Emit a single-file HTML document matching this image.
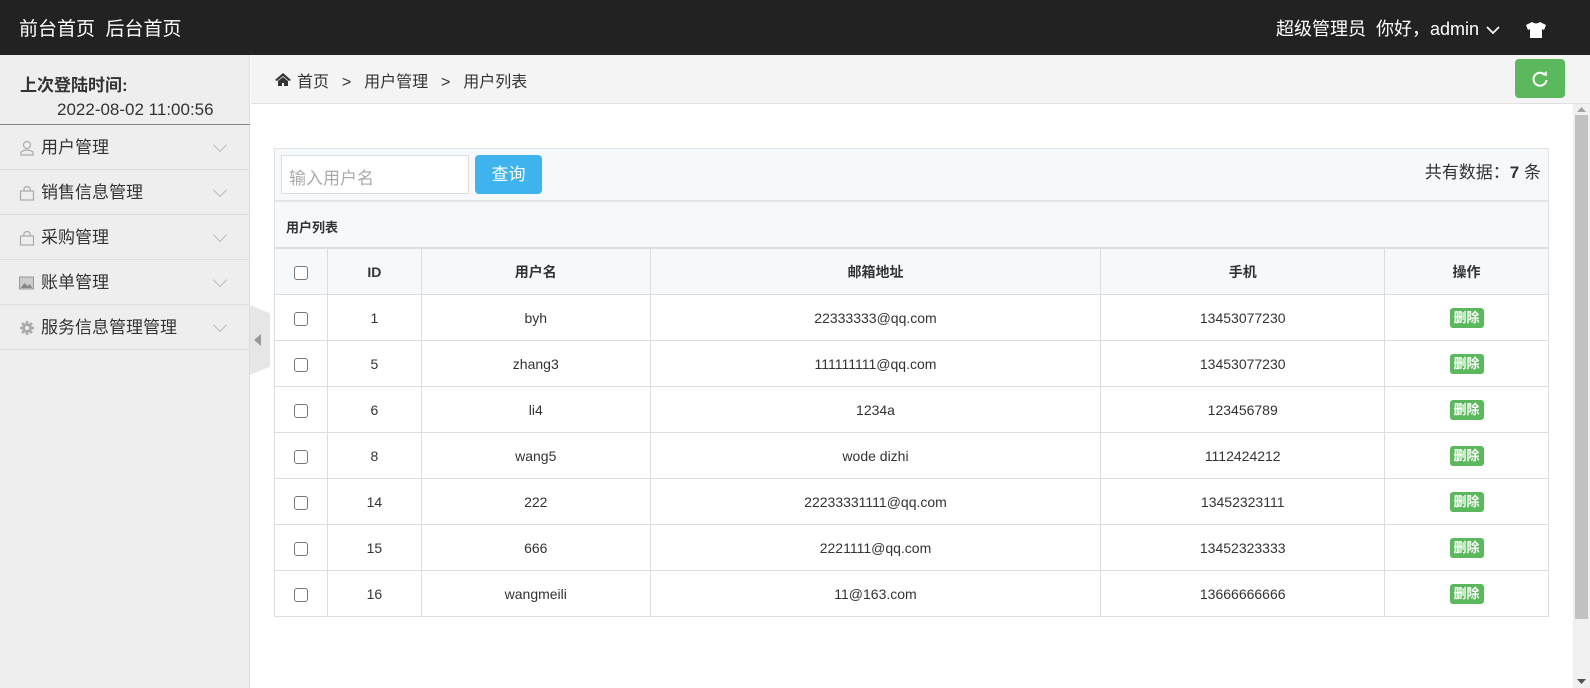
<!DOCTYPE html>
<html><head><meta charset="utf-8"><style>
*{margin:0;padding:0;box-sizing:border-box}
body{width:1590px;height:688px;overflow:hidden;background:#fff;font-family:"Liberation Sans","Noto Sans CJK SC",sans-serif;color:#333;position:relative}
.top{position:absolute;left:0;top:0;width:1590px;height:55px;background:#222;color:#fff;font-size:19px}
.top .l{position:absolute;left:19px;top:14px}
.top .r{position:absolute;left:1276px;top:15px;font-size:18px}
.side{position:absolute;left:0;top:55px;width:250px;height:633px;background:#eee;border-right:1px solid #ddd}
.side .h{position:absolute;left:20px;top:16px;font-size:17px;font-weight:bold}
.side .d{position:absolute;left:57px;top:45px;font-size:17px}
.side .line{position:absolute;left:0;top:69px;width:250px;height:1px;background:#888}
.menu{position:absolute;left:0;top:70px;width:250px}
.mi{height:45px;border-bottom:1px solid #ddd;font-size:17px;line-height:46px;padding-left:41px;position:relative}
.mi .ic{position:absolute;left:19px;top:15px;width:16px;height:16px;color:#aaa}
.mi .ch{position:absolute;left:215px;top:15px;width:10px;height:10px;border-right:1px solid #bbb;border-bottom:1px solid #bbb;transform:rotate(45deg)}
.tab{position:absolute;left:250px;top:305px;width:20px;height:70px;background:#e6e6e6;clip-path:polygon(0 0,100% 12%,100% 88%,0 100%)}
.tab:after{content:"";position:absolute;left:4px;top:29px;border:6px solid transparent;border-right:7px solid #999;border-left:0}
.bc{position:absolute;left:251px;top:55px;width:1339px;height:49px;background:#f4f4f4;border-bottom:1px solid #e2e2e2;font-size:16px}
.bc .t{position:absolute;left:46px;top:13px;word-spacing:2px}
.ref{position:absolute;left:1515px;top:59px;width:50px;height:39px;background:#5cb85c;border-radius:4px}
.sb{position:absolute;left:1573px;top:104px;width:17px;height:584px;background:#f0f0f0}
.sb .th{position:absolute;left:2px;top:11px;width:13px;height:504px;background:#c1c1c1}
.panel{position:absolute;left:274px;top:148px;width:1275px;height:470px}
.srch{height:53px;background:#f5f9fc;border:1px solid #e3e3e3;position:relative}
.inp{position:absolute;left:6px;top:6px;width:188px;height:39px;border:1px solid #ddd;background:#fff;color:#aaa;font-size:17px;padding:8px 7px}
.btn{position:absolute;left:200px;top:6px;width:67px;height:39px;background:#3eb3ee;border-radius:4px;color:#fff;font-size:17px;text-align:center;line-height:39px}
.cnt{position:absolute;right:7px;top:9px;font-size:17px}
.ttl{height:47px;background:#f5f9fc;border:1px solid #ddd;border-top:1px solid #e8e8e8;font-size:13px;font-weight:bold;padding:15px 11px}
table{border-collapse:collapse;width:1275px;font-size:14px}
td,th{border:1px solid #ddd;height:46px;text-align:center}
th{background:#f5f9fc;font-weight:bold;font-size:14px}
.cb{display:inline-block;width:14px;height:14px;border:1px solid #777;border-radius:3px;vertical-align:middle;background:#fff}
.del{display:inline-block;background:#5cb85c;color:#fff;font-size:13px;font-weight:bold;padding:1px 4px;border-radius:3px;line-height:18px}
</style></head><body>
<div class="top"><span class="l">前台首页&nbsp;&nbsp;后台首页</span>
<span class="r">超级管理员&nbsp;&nbsp;你好，admin
<svg width="14" height="10" viewBox="0 0 14 10" style="vertical-align:middle;margin-left:2px"><path d="M1 2 L7 8 L13 2" stroke="#fff" stroke-width="1.7" fill="none"/></svg>
<svg width="22" height="18" viewBox="0 0 22 18" style="vertical-align:middle;margin-left:20px"><path d="M7 1 L1 4 L3 9 L5 8 L5 17 L17 17 L17 8 L19 9 L21 4 L15 1 Q11 4 7 1Z" fill="#fff"/></svg></span></div>
<div class="side">
<div class="h">上次登陆时间:</div>
<div class="d">2022-08-02 11:00:56</div>
<div class="line"></div>
<div class="menu">
<div class="mi"><svg class="ic" viewBox="0 0 16 16"><circle cx="8" cy="5" r="3.5" stroke="#aaa" fill="none" stroke-width="1.2"/><path d="M2 15 L2 12 Q8 8 14 12 L14 15 Z" stroke="#aaa" fill="none" stroke-width="1.2"/></svg>用户管理<span class="ch"></span></div>
<div class="mi"><svg class="ic" viewBox="0 0 16 16"><rect x="1.5" y="6" width="13" height="9" stroke="#aaa" fill="none" stroke-width="1.2"/><path d="M5 6 V3 Q8 0 11 3 V6" stroke="#aaa" fill="none" stroke-width="1.2"/></svg>销售信息管理<span class="ch"></span></div>
<div class="mi"><svg class="ic" viewBox="0 0 16 16"><rect x="1.5" y="6" width="13" height="9" stroke="#aaa" fill="none" stroke-width="1.2"/><path d="M5 6 V3 Q8 0 11 3 V6" stroke="#aaa" fill="none" stroke-width="1.2"/></svg>采购管理<span class="ch"></span></div>
<div class="mi"><svg class="ic" viewBox="0 0 16 16" style="left:17px;width:19px"><rect x="1" y="2" width="14" height="12" fill="#ccc" stroke="#999"/><path d="M2 13 L6 8 L9 11 L11 9 L14 13Z" fill="#888"/></svg>账单管理<span class="ch"></span></div>
<div class="mi"><svg class="ic" viewBox="0 0 16 16"><circle cx="8" cy="8" r="5" fill="#aaa"/><path d="M8 1V15M1 8H15M3 3L13 13M13 3L3 13" stroke="#aaa" stroke-width="2.5"/><circle cx="8" cy="8" r="2" fill="#eee"/></svg>服务信息管理管理<span class="ch"></span></div>
</div></div>
<div class="tab"></div>
<div class="bc"><svg style="position:absolute;left:24px;top:18px" width="16" height="13" viewBox="0 0 16 13"><path d="M8 0 L0 7 L2 8 L8 3 L14 8 L16 7Z M3 8 L3 13 L7 13 L7 10 L9 10 L9 13 L13 13 L13 8 L8 4Z" fill="#333"/></svg><span class="t">首页 &nbsp;&gt;&nbsp; 用户管理 &nbsp;&gt;&nbsp; 用户列表</span></div>
<div class="ref"><svg style="position:absolute;left:16px;top:11px" width="18" height="18" viewBox="0 0 18 18"><path d="M14 5 A6.5 6.5 0 1 0 15.5 10" stroke="#fff" stroke-width="2" fill="none"/><path d="M11 5 L16 6 L15.5 1Z" fill="#fff"/></svg></div>
<div class="sb"><div class="th"></div>
<svg style="position:absolute;left:4px;top:3px" width="9" height="5"><path d="M0 5 L4.5 0 L9 5Z" fill="#a3a3a3"/></svg>
<svg style="position:absolute;left:4px;top:575px" width="9" height="5"><path d="M0 0 L4.5 5 L9 0Z" fill="#505050"/></svg></div>
<div class="panel">
<div class="srch"><div class="inp">输入用户名</div><div class="btn">查询</div><div class="cnt">共有数据：<b>7</b> 条</div></div>
<div class="ttl">用户列表</div>
<table>
<colgroup><col style="width:53px"><col style="width:94px"><col style="width:229px"><col style="width:451px"><col style="width:284px"><col style="width:164px"></colgroup>
<tr><th><span class="cb"></span></th><th>ID</th><th>用户名</th><th>邮箱地址</th><th>手机</th><th>操作</th></tr>
<tr><td><span class="cb"></span></td><td>1</td><td>byh</td><td>22333333@qq.com</td><td>13453077230</td><td><span class="del">删除</span></td></tr>
<tr><td><span class="cb"></span></td><td>5</td><td>zhang3</td><td>111111111@qq.com</td><td>13453077230</td><td><span class="del">删除</span></td></tr>
<tr><td><span class="cb"></span></td><td>6</td><td>li4</td><td>1234a</td><td>123456789</td><td><span class="del">删除</span></td></tr>
<tr><td><span class="cb"></span></td><td>8</td><td>wang5</td><td>wode dizhi</td><td>1112424212</td><td><span class="del">删除</span></td></tr>
<tr><td><span class="cb"></span></td><td>14</td><td>222</td><td>22233331111@qq.com</td><td>13452323111</td><td><span class="del">删除</span></td></tr>
<tr><td><span class="cb"></span></td><td>15</td><td>666</td><td>2221111@qq.com</td><td>13452323333</td><td><span class="del">删除</span></td></tr>
<tr><td><span class="cb"></span></td><td>16</td><td>wangmeili</td><td>11@163.com</td><td>13666666666</td><td><span class="del">删除</span></td></tr>
</table></div>
</body></html>
